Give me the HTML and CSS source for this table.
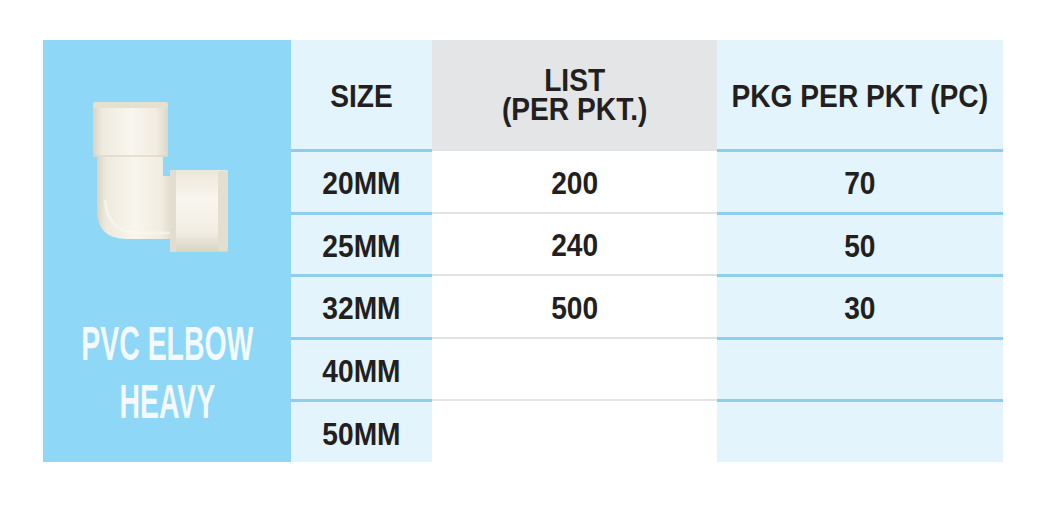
FILE: index.html
```html
<!DOCTYPE html>
<html lang="en">
<head>
<meta charset="utf-8">
<title>PVC Elbow Heavy</title>
<link rel="stylesheet" href="styles.css">
</head>
<body>
<div class="sheet">
  <div class="product">
    <svg class="elbow" width="248" height="274" viewBox="0 0 248 274" aria-hidden="true">
      <defs>
        <linearGradient id="gv" x1="0" x2="1" y1="0" y2="0">
          <stop offset="0" stop-color="#d8d4c4"/>
          <stop offset="0.12" stop-color="#eeeadd"/>
          <stop offset="0.5" stop-color="#f8f6ee"/>
          <stop offset="0.85" stop-color="#f0ece0"/>
          <stop offset="1" stop-color="#dcd8ca"/>
        </linearGradient>
        <linearGradient id="gh" x1="0" x2="0" y1="0" y2="1">
          <stop offset="0" stop-color="#ebe7da"/>
          <stop offset="0.35" stop-color="#f8f6ee"/>
          <stop offset="0.75" stop-color="#f1eee3"/>
          <stop offset="1" stop-color="#d8d4c4"/>
        </linearGradient>
      </defs>
      <path d="M54 115 H120 V136 H130 V199 H84 Q54 199 54 170 Z" fill="url(#gv)"/>
      <path d="M62 160 Q64 190 92 193 H128" fill="none" stroke="#fbfaf4" stroke-width="3" opacity="0.5"/>
      <rect x="50" y="63" width="75" height="54" rx="2" fill="url(#gv)"/>
      <rect x="50" y="115" width="75" height="2" fill="#d8d3c3" opacity="0.6"/>
      <rect x="50" y="62" width="75" height="6" rx="2" fill="#e5e0cf"/>
      <rect x="127" y="130" width="58" height="82" rx="2" fill="url(#gh)"/>
      <rect x="127" y="130" width="6" height="82" fill="#e2ddce"/>
      <rect x="175" y="131" width="10" height="80" rx="2" fill="#e3dfd0"/>
    </svg>
    <div class="product-name">
      <span class="name-line">PVC ELBOW</span>
      <span class="name-line">HEAVY</span>
    </div>
  </div>
  <div class="table">
    <div class="cell head c-size"><span class="t">SIZE</span></div>
    <div class="cell head c-list"><span class="t stack"><span class="ln">LIST</span><span class="ln">(PER PKT.)</span></span></div>
    <div class="cell head c-pkg"><span class="t">PKG PER PKT (PC)</span></div>

    <div class="cell row c-size"><span class="t">20MM</span></div>
    <div class="cell row c-list"><span class="t">200</span></div>
    <div class="cell row c-pkg"><span class="t">70</span></div>

    <div class="cell row c-size"><span class="t">25MM</span></div>
    <div class="cell row c-list"><span class="t">240</span></div>
    <div class="cell row c-pkg"><span class="t">50</span></div>

    <div class="cell row c-size"><span class="t">32MM</span></div>
    <div class="cell row c-list"><span class="t">500</span></div>
    <div class="cell row c-pkg"><span class="t">30</span></div>

    <div class="cell row c-size"><span class="t">40MM</span></div>
    <div class="cell row c-list"></div>
    <div class="cell row c-pkg"></div>

    <div class="cell row c-size"><span class="t">50MM</span></div>
    <div class="cell row c-list"></div>
    <div class="cell row c-pkg"></div>
  </div>
</div>
</body>
</html>
```
FILE: styles.css
```css
html, body {
  margin: 0;
  padding: 0;
  background: #ffffff;
}

body {
  width: 1056px;
  height: 508px;
  overflow: hidden;
  font-family: "Liberation Sans", Arial, sans-serif;
}

.sheet {
  display: flex;
  margin: 40px 0 0 43px;
  width: 960px;
  height: 422px;
}

.product {
  width: 248px;
  flex: none;
  background: #8fd7f6;
  display: flex;
  flex-direction: column;
  align-items: center;
}

.elbow {
  display: block;
}

.product-name {
  display: flex;
  flex-direction: column;
  align-items: center;
  color: #f3f9fc;
  font-weight: bold;
  font-size: 49px;
  line-height: 58px;
  transform: scaleX(0.58);
}

.name-line {
  white-space: nowrap;
}

.table {
  display: grid;
  grid-template-columns: 141px 285px 286px;
  grid-template-rows: 109px repeat(5, 1fr);
}

.cell {
  display: flex;
  align-items: center;
  justify-content: center;
  text-align: center;
  box-sizing: border-box;
  padding-top: 4px;
  font-weight: bold;
  font-size: 32px;
  color: #231f20;
  white-space: nowrap;
}

.t {
  display: inline-block;
  transform: scaleX(0.88);
}

.stack {
  display: flex;
  flex-direction: column;
  align-items: center;
}

.ln {
  display: block;
  height: 29px;
  line-height: 29px;
}

.head.c-list {
  background: #e4e5e7;
  padding-top: 0;
}

.c-size, .c-pkg {
  background: #e3f4fc;
}

.row.c-list {
  background: #ffffff;
  border-top: 2px solid #e2e3e5;
}

.row.c-size, .row.c-pkg {
  border-top: 3px solid #8dcdee;
}
```
